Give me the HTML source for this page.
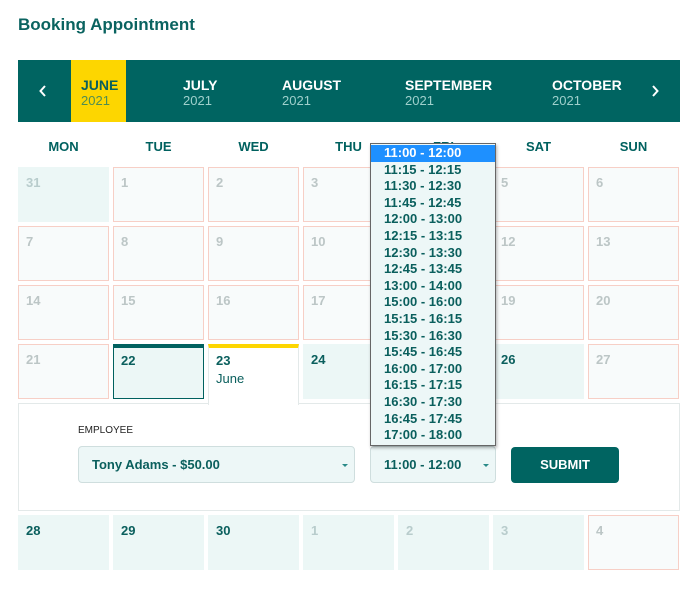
<!DOCTYPE html>
<html><head><meta charset="utf-8"><style>
*{box-sizing:border-box;margin:0;padding:0}
body{width:695px;height:599px;background:#fff;font-family:"Liberation Sans",sans-serif;position:relative;overflow:hidden;color:#00615f}
.a{position:absolute}
h1{position:absolute;left:18px;top:15px;font-size:17px;font-weight:bold;color:#0a6360}
.bar{left:18px;top:60px;width:662px;height:62px;background:#006461}
.m{position:absolute;top:18px;color:#fff;font-weight:bold;font-size:14px;line-height:14px}
.m span{display:block;font-weight:normal;color:#9fd0cc;font-size:13px;margin-top:2px}
.dh{top:139px;font-size:13px;font-weight:bold;width:91px;text-align:center}
.c{position:absolute;width:91px;height:55px;padding:8px 0 0 8px;font-size:13px;font-weight:bold}
.p{border:1px solid #f7cfc6;background:#f8fbfb;color:#bcc6c6;padding:7px 0 0 7px}
.t{background:#ecf7f6;color:#0a5f5d}
.g{background:#ecf7f6;color:#b8cccc}
.dd{left:370px;top:143px;width:126px;height:303px;background:#edf7f7;border:1px solid #666;box-shadow:1px 2px 3px rgba(0,0,0,.3);font-size:13px;font-weight:bold;color:#0a5f5d;padding-top:1px}
.dd div{height:16.6px;line-height:16.6px;padding-left:13px}
.sel{position:absolute;background:#edf7f7;border:1px solid #cfdede;border-radius:4px;font-size:13px;font-weight:bold;color:#0a5f5d;line-height:36px}
.car{position:absolute;right:6px;top:17px;border-left:3px solid transparent;border-right:3px solid transparent;border-top:3px solid #2a8a88}
</style></head><body>
<h1>Booking Appointment</h1>
<div class="a bar">
<svg class="a" style="left:20px;top:25px" width="10" height="12"><path d="M7 1L2.5 6 7 11" stroke="#fff" stroke-width="2" fill="none"/></svg>
<div class="a" style="left:53px;top:0;width:55px;height:62px;background:#fdd600"></div>
<div class="m" style="left:63px;color:#0a5f5d">JUNE<span style="color:#4f8d52">2021</span></div>
<div class="m" style="left:165px">JULY<span>2021</span></div>
<div class="m" style="left:264px">AUGUST<span>2021</span></div>
<div class="m" style="left:387px">SEPTEMBER<span>2021</span></div>
<div class="m" style="left:534px">OCTOBER<span>2021</span></div>
<svg class="a" style="left:632px;top:25px" width="10" height="12"><path d="M3 1l4.5 5L3 11" stroke="#fff" stroke-width="2" fill="none"/></svg>
</div>
<div class="a dh" style="left:18px">MON</div><div class="a dh" style="left:113px">TUE</div><div class="a dh" style="left:208px">WED</div><div class="a dh" style="left:303px">THU</div><div class="a dh" style="left:398px">FRI</div><div class="a dh" style="left:493px">SAT</div><div class="a dh" style="left:588px">SUN</div>

<div class="c g" style="left:18px;top:167px">31</div>
<div class="c p" style="left:113px;top:167px">1</div><div class="c p" style="left:208px;top:167px">2</div><div class="c p" style="left:303px;top:167px">3</div><div class="c p" style="left:398px;top:167px">4</div><div class="c p" style="left:493px;top:167px">5</div><div class="c p" style="left:588px;top:167px">6</div>
<div class="c p" style="left:18px;top:226px">7</div><div class="c p" style="left:113px;top:226px">8</div><div class="c p" style="left:208px;top:226px">9</div><div class="c p" style="left:303px;top:226px">10</div><div class="c p" style="left:398px;top:226px">11</div><div class="c p" style="left:493px;top:226px">12</div><div class="c p" style="left:588px;top:226px">13</div>
<div class="c p" style="left:18px;top:285px">14</div><div class="c p" style="left:113px;top:285px">15</div><div class="c p" style="left:208px;top:285px">16</div><div class="c p" style="left:303px;top:285px">17</div><div class="c p" style="left:398px;top:285px">18</div><div class="c p" style="left:493px;top:285px">19</div><div class="c p" style="left:588px;top:285px">20</div>
<div class="c p" style="left:18px;top:344px">21</div>
<div class="c t" style="left:113px;top:344px;border:1px solid #00615f;border-top:4px solid #00615f;padding:5px 0 0 7px">22</div>
<div class="a" style="left:18px;top:403px;width:662px;height:108px;border:1px solid #e3e9e9;background:#fff"></div>
<div class="c" style="left:208px;top:344px;height:61px;background:#fff;border:1px solid #e3e9e9;border-bottom:none;border-top:4px solid #fdd600;padding:5px 0 0 7px;color:#0a5f5d">23<div style="font-weight:normal;margin-top:3px">June</div></div>
<div class="c t" style="left:303px;top:344px">24</div><div class="c t" style="left:398px;top:344px">25</div><div class="c t" style="left:493px;top:344px">26</div><div class="c p" style="left:588px;top:344px">27</div>
<div class="a" style="left:78px;top:425px;font-size:10px;color:#222">EMPLOYEE</div>
<div class="sel" style="left:78px;top:446px;width:277px;height:37px;padding-left:13px">Tony Adams - $50.00<div class="car"></div></div>
<div class="sel" style="left:370px;top:446px;width:126px;height:37px;padding-left:13px">11:00 - 12:00<div class="car"></div></div>
<div class="a" style="left:511px;top:447px;width:108px;height:36px;background:#006461;border-radius:4px;color:#fff;font-weight:bold;font-size:13px;text-align:center;line-height:36px">SUBMIT</div>
<div class="c t" style="left:18px;top:515px">28</div><div class="c t" style="left:113px;top:515px">29</div><div class="c t" style="left:208px;top:515px">30</div><div class="c g" style="left:303px;top:515px">1</div><div class="c g" style="left:398px;top:515px">2</div><div class="c g" style="left:493px;top:515px">3</div><div class="c p" style="left:588px;top:515px">4</div>
<div class="a dd">
<div style="background:#1e90ff;color:#fff">11:00 - 12:00</div><div>11:15 - 12:15</div><div>11:30 - 12:30</div><div>11:45 - 12:45</div><div>12:00 - 13:00</div><div>12:15 - 13:15</div><div>12:30 - 13:30</div><div>12:45 - 13:45</div><div>13:00 - 14:00</div><div>15:00 - 16:00</div><div>15:15 - 16:15</div><div>15:30 - 16:30</div><div>15:45 - 16:45</div><div>16:00 - 17:00</div><div>16:15 - 17:15</div><div>16:30 - 17:30</div><div>16:45 - 17:45</div><div>17:00 - 18:00</div>
</div>
</body></html>
